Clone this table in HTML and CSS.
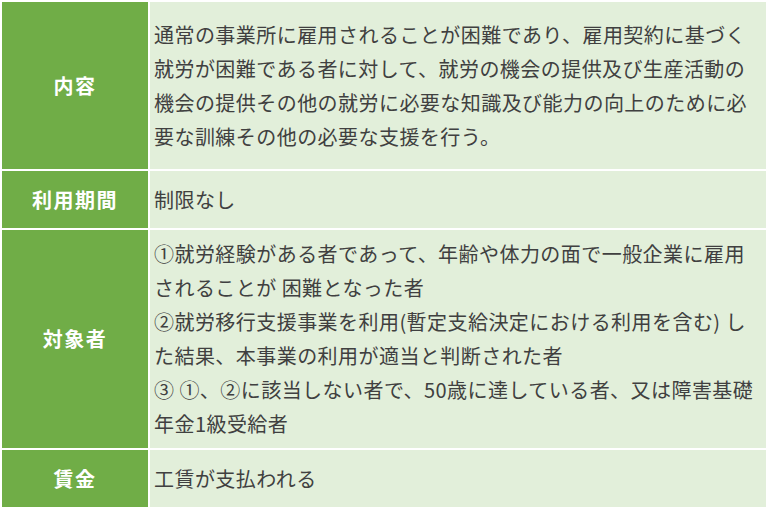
FILE: index.html
```html
<!DOCTYPE html>
<html lang="ja">
<head>
<meta charset="utf-8">
<link rel="stylesheet" href="styles.css">
</head>
<body>
<table class="info">
  <tr class="r1">
    <th>内容</th>
    <td>通常の事業所に雇用されることが困難であり、雇用契約に基づく<br>就労が困難である者に対して、就労の機会の提供及び生産活動の<br>機会の提供その他の就労に必要な知識及び能力の向上のために必<br>要な訓練その他の必要な支援を行う。</td>
  </tr>
  <tr class="r2">
    <th>利用期間</th>
    <td>制限なし</td>
  </tr>
  <tr class="r3">
    <th>対象者</th>
    <td>①就労経験がある者であって、年齢や体力の面で一般企業に雇用<br>されることが 困難となった者<br>②就労移行支援事業を利用(暫定支給決定における利用を含む) し<br>た結果、本事業の利用が適当と判断された者<br>③ ①、②に該当しない者で、50歳に達している者、又は障害基礎<br>年金1級受給者</td>
  </tr>
  <tr class="r4">
    <th>賃金</th>
    <td>工賃が支払われる</td>
  </tr>
</table>
</body>
</html>
```
FILE: styles.css
```css
html, body {
  margin: 0;
  padding: 0;
  background: #ffffff;
}
.info {
  border-collapse: separate;
  border-spacing: 2px;
  width: 768px;
  font-family: "Noto Sans CJK JP", "Noto Sans", sans-serif;
  font-size: 20px;
  line-height: 34px;
}
.info th {
  width: 146px;
  padding: 0;
  background: #70ad47;
  color: #ffffff;
  font-weight: bold;
  letter-spacing: 1.5px;
  text-align: center;
  vertical-align: middle;
}
.info td {
  padding: 0 0 0 4px;
  background: #e2efda;
  color: #404040;
  letter-spacing: 0.45px;
  vertical-align: middle;
  white-space: nowrap;
}
.r1 th, .r1 td { height: 167px; }
.r2 th, .r2 td { height: 57px; }
.r3 th, .r3 td { height: 218px; }
.r4 th, .r4 td { height: 57px; }
```
